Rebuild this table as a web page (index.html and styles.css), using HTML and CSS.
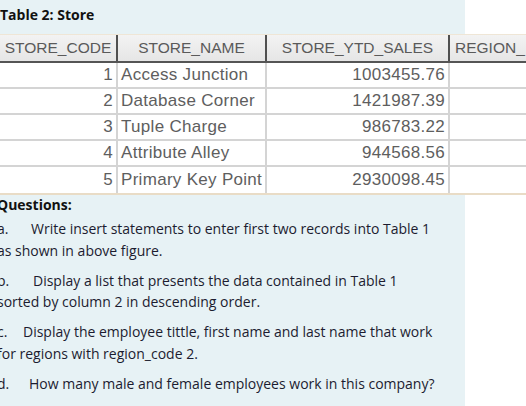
FILE: index.html
```html
<!DOCTYPE html>
<html>
<head>
<meta charset="utf-8">
<link rel="stylesheet" href="styles.css">
</head>
<body>
<div class="page">
  <h1 class="title">Table 2: Store</h1>
  <div class="figure">
    <table class="store">
      <colgroup>
        <col class="c1"><col class="c2"><col class="c3"><col class="c4">
      </colgroup>
      <thead>
        <tr><th>STORE_CODE</th><th>STORE_NAME</th><th>STORE_YTD_SALES</th><th class="last">REGION_</th></tr>
      </thead>
      <tbody>
        <tr><td class="num">1</td><td>Access Junction</td><td class="num">1003455.76</td><td></td></tr>
        <tr><td class="num">2</td><td>Database Corner</td><td class="num">1421987.39</td><td></td></tr>
        <tr><td class="num">3</td><td>Tuple Charge</td><td class="num">986783.22</td><td></td></tr>
        <tr><td class="num">4</td><td>Attribute Alley</td><td class="num">944568.56</td><td></td></tr>
        <tr><td class="num">5</td><td>Primary Key Point</td><td class="num">2930098.45</td><td></td></tr>
      </tbody>
    </table>
  </div>
  <div class="questions">
    <h2 class="qhead">Questions:</h2>
    <p class="q"><span class="lbl la">a.</span>Write insert statements to enter first two records into Table 1<br>as shown in above figure.</p>
    <p class="q"><span class="lbl lb">b.</span>Display a list that presents the data contained in Table 1<br>sorted by column 2 in descending order.</p>
    <p class="q"><span class="lbl lc">c.</span>Display the employee tittle, first name and last name that work<br>for regions with region_code 2.</p>
    <p class="q"><span class="lbl ld">d.</span>How many male and female employees work in this company?</p>
  </div>
</div>
</body>
</html>
```

FILE: styles.css
```css
html, body {
  margin: 0;
  padding: 0;
  background: #ffffff;
}
.page {
  width: 465px;
  height: 406px;
  background: #e7f2f5;
  font-family: "Open Sans", "Noto Sans", sans-serif;
  color: #1c1c30;
  overflow: visible;
}
.title {
  margin: 0;
  padding: 6px 0 0 0;
  height: 34px;
  box-sizing: border-box;
  font-size: 14px;
  font-weight: 700;
  line-height: 18px;
  color: #111;
}
.figure {
  width: 526px;
  overflow: hidden;
  background: #ffffff;
  border-top: 1px solid #efe6d6;
  border-bottom: 2px solid #e9dcc6;
}
.store {
  border-collapse: collapse;
  table-layout: fixed;
  width: 560px;
  font-family: "Liberation Sans", Arial, sans-serif;
  color: #5e5e5e;
}
.c1 { width: 117px; }
.c2 { width: 149px; }
.c3 { width: 183px; }
.c4 { width: 111px; }
.store th {
  height: 26px;
  padding: 0 3px;
  font-weight: 400;
  font-size: 15.5px;
  color: #5a5a5a;
  background: linear-gradient(#f3f3f3, #e6e6e6);
  border-right: 2px solid #505050;
  border-bottom: 2px solid #555;
  text-align: center;
  white-space: nowrap;
  overflow: hidden;
}
.store th.last {
  text-align: left;
  padding-left: 5px;
  border-right: none;
}
.store td {
  height: 24px;
  padding: 0 3px;
  border-bottom: 2px solid #d4d4d4;
  border-right: 2px solid #d4d4d4;
  white-space: nowrap;
  font-size: 17px;
  letter-spacing: 0.3px;
}
.store tbody tr:last-child td {
  border-bottom: none;
  height: 26px;
}
.store td.num {
  text-align: right;
}
.questions {
  margin-left: -3px;
  padding-top: 0;
}
.qhead {
  margin: 0 0 3px 0;
  font-size: 14px;
  font-weight: 700;
  line-height: 20px;
  color: #111;
}
.q {
  margin: 0 0 8.5px 0;
  font-size: 14px;
  line-height: 21.5px;
}
.lbl {
  display: inline-block;
}
.la { width: 34px; }
.lb { width: 36px; }
.lc { width: 26px; }
.ld { width: 32px; }
```
